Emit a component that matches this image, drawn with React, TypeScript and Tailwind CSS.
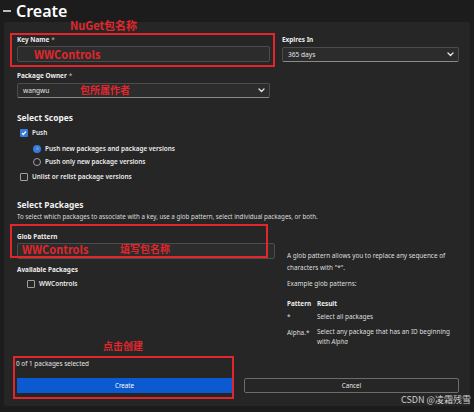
import React from 'react';

const FONT = { fontFamily: '"Noto Sans", "Open Sans", "Noto Sans CJK SC", sans-serif' };
const CJK = { fontFamily: '"Noto Sans CJK SC", "Noto Sans", sans-serif' };

const Chevron = () => (
  <svg width="7" height="5" viewBox="0 0 7 5" className="shrink-0">
    <path d="M1 1l2.5 2.5L6 1" fill="none" stroke="#e6e6e6" strokeWidth="1.3" strokeLinecap="round" strokeLinejoin="round" />
  </svg>
);

const Label: React.FC<{ text: string; required?: boolean }> = ({ text, required }) => (
  <div className="h-[10px] text-[6.4px] leading-[10px] font-bold text-[#ececec]">
    {text}
    {required && <span className="ml-[2px] font-normal text-[#bdbdbd]">*</span>}
  </div>
);

const Select: React.FC<{ value: string }> = ({ value }) => (
  <div className="flex h-[15px] items-center justify-between rounded-[2px] border border-[#4c4c4c] border-b-[#8a8a8a] bg-[#2c2c2c] pl-[5px] pr-[4px] text-[6.6px] text-[#e4e4e4]">
    <span>{value}</span>
    <Chevron />
  </div>
);

const Checkbox: React.FC<{ checked?: boolean; label: string }> = ({ checked, label }) => (
  <div className="flex h-[13px] items-center gap-[4px] text-[6.4px] font-semibold text-[#ececec]">
    {checked ? (
      <span className="flex h-[8px] w-[8px] items-center justify-center rounded-[1px] bg-[#3a7bd9]">
        <svg width="6" height="6" viewBox="0 0 6 6">
          <path d="M1 3.2l1.3 1.3L5 1.4" fill="none" stroke="#fff" strokeWidth="1.2" />
        </svg>
      </span>
    ) : (
      <span className="h-[8px] w-[8px] rounded-[1px] border border-[#a0a0a0]" />
    )}
    <span>{label}</span>
  </div>
);

const Radio: React.FC<{ checked?: boolean; label: string }> = ({ checked, label }) => (
  <div className="flex h-[13px] items-center gap-[4px] text-[6.4px] font-semibold text-[#ececec]">
    {checked ? (
      <span className="flex h-[8px] w-[8px] items-center justify-center rounded-full bg-[#3a7bd9]">
        <span className="h-[3px] w-[3px] rounded-full bg-[#5b96e8]" />
      </span>
    ) : (
      <span className="h-[8px] w-[8px] rounded-full border border-[#a0a0a0]" />
    )}
    <span>{label}</span>
  </div>
);

const Note: React.FC<{ text: string; className: string }> = ({ text, className }) => (
  <div className={`pointer-events-none absolute font-bold text-[#e3262c] ${className}`} style={CJK}>
    {text}
  </div>
);

export default function App() {
  return (
    <div className="relative h-[412px] w-[474px] overflow-hidden bg-[#1c1c1c]" style={FONT}>
      {/* title bar */}
      <div className="flex h-[22px] items-center gap-[5px] pl-[3px] text-[16px] font-semibold leading-none text-white">
        <span className="h-[1.5px] w-[8px] bg-[#bdbdbd]" />
        <span>Create</span>
      </div>

      {/* panel */}
      <div className="relative ml-[4px] h-[384px] w-[466px] rounded-[2px] bg-[#262626] pl-[13px] pr-[7px] pt-[13px]">
        <div className="grid grid-cols-[253px_177px] gap-x-[12px]">
          <div>
            <Label text="Key Name" required />
            <div className="mt-[1px] h-[16px] rounded-[2px] border border-[#4c4c4c] bg-[#2c2c2c]" />
          </div>
          <div>
            <Label text="Expires In" />
            <div className="mt-[2px]">
              <Select value="365 days" />
            </div>
          </div>
          <div className="mt-[9px]">
            <Label text="Package Owner" required />
            <div className="mt-[2px]">
              <Select value="wangwu" />
            </div>
          </div>
        </div>

        <div className="mt-[13px] h-[13px] text-[8.4px] font-bold leading-[13px] text-[#f0f0f0]">Select Scopes</div>
        <div className="mt-[2px] ml-[3px] flex flex-col gap-[2px]">
          <Checkbox checked label="Push" />
          <div className="ml-[13px] mt-[1px] flex flex-col">
            <Radio checked label="Push new packages and package versions" />
            <Radio label="Push only new package versions" />
          </div>
          <Checkbox label="Unlist or relist package versions" />
        </div>

        <div className="mt-[15px] h-[13px] text-[8.4px] font-bold leading-[13px] text-[#f0f0f0]">Select Packages</div>
        <div className="mt-[1px] h-[10px] whitespace-nowrap text-[6.2px] leading-[10px] text-[#dcdcdc]">
          To select which packages to associate with a key, use a glob pattern, select individual packages, or both.
        </div>

        <div className="mt-[10px] grid grid-cols-[258px_1fr] gap-x-[12px]">
          <div>
            <Label text="Glob Pattern" />
            <div className="mt-[1px] h-[16px] rounded-[2px] border border-[#4c4c4c] bg-[#2c2c2c]" />
            <div className="mt-[6px]">
              <Label text="Available Packages" />
            </div>
            <div className="ml-[10px] mt-[2px]">
              <Checkbox label="WWControls" />
            </div>
          </div>
          <div className="mt-[18px] w-[170px] text-[6.4px] leading-[12px] text-[#dedede]">
            <p>A glob pattern allows you to replace any sequence of characters with "*".</p>
            <p className="mt-[4px]">Example glob patterns:</p>
            <div className="mt-[8px] grid grid-cols-[30px_1fr]">
              <span className="font-bold text-[#ececec]">Pattern</span>
              <span className="font-bold text-[#ececec]">Result</span>
              <span className="mt-[1px]">*</span>
              <span className="mt-[1px]">Select all packages</span>
              <span className="mt-[4px]">Alpha.*</span>
              <div className="mt-[4px] leading-[10px]">
                <div>Select any package that has an ID beginning</div>
                <div>
                  with <span className="italic">Alpha</span>
                </div>
              </div>
            </div>
          </div>
        </div>

        <div className="mt-[12px] h-[10px] text-[6.4px] leading-[10px] text-[#e4e4e4]" style={{ marginLeft: -1 }}>
          0 of 1 packages selected
        </div>
        <div className="mt-[9px] grid grid-cols-[215px_215px] gap-x-[12px]">
          <div className="flex h-[15px] items-center justify-center bg-[#0b5ad1] text-[6.2px] text-white">Create</div>
          <div className="flex h-[15px] items-center justify-center rounded-[2px] border border-[#6c6c6c] text-[6.2px] text-[#e6e6e6]">
            Cancel
          </div>
        </div>

        {/* annotations */}
        <div className="pointer-events-none absolute left-[6px] top-[11px] h-[34px] w-[265px] border-2 border-[#e3262c]" />
        <div className="pointer-events-none absolute left-[6px] top-[202px] h-[34px] w-[258px] border-2 border-[#e3262c]" />
        <div className="pointer-events-none absolute left-[9px] top-[334px] h-[43px] w-[221px] border-2 border-[#e3262c]" />
      </div>

      <Note text="NuGet包名称" className="left-[70px] top-[17px] text-[11px] leading-[16px]" />
      <Note text="WWControls" className="left-[34px] top-[46px] text-[11px] leading-[16px]" />
      <Note text="包所属作者" className="left-[80px] top-[83px] text-[10px] leading-[14px]" />
      <Note text="WWControls" className="left-[22px] top-[241px] text-[11px] leading-[16px]" />
      <Note text="填写包名称" className="left-[120px] top-[242px] text-[10px] leading-[14px]" />
      <Note text="点击创建" className="left-[103px] top-[339px] text-[10px] leading-[14px]" />

      <div className="pointer-events-none absolute right-[3px] top-[394px] text-[9px] leading-[12px] text-[#cfcfcf]" style={CJK}>
        CSDN @凌霜残雪
      </div>
    </div>
  );
}
